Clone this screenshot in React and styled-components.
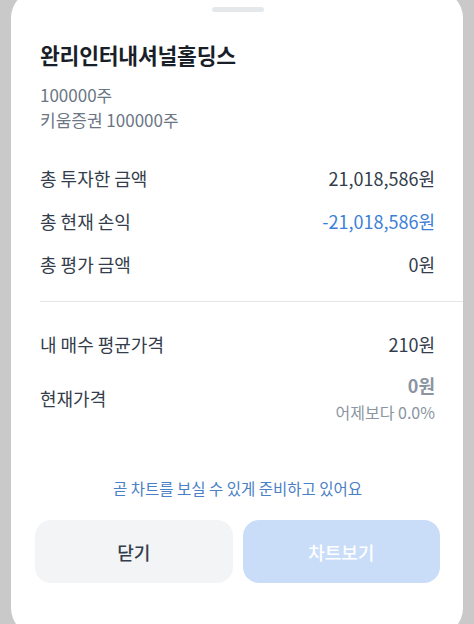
import styled, { createGlobalStyle, css } from "styled-components";

const GlobalStyle = createGlobalStyle`
  html, body {
    margin: 0;
    padding: 0;
    background: #c9c9c9;
    overflow: hidden;
  }
  body {
    font-family: "Noto Sans CJK KR", "Noto Sans", sans-serif;
    -webkit-font-smoothing: antialiased;
  }
`;

const Sheet = styled.div`
  box-sizing: border-box;
  margin: -10px 11px 0;
  height: 646px;
  background: #ffffff;
  border-radius: 28px;
  padding: 17px 28px 0 29px;
  display: flex;
  flex-direction: column;
`;

const Handle = styled.div`
  align-self: center;
  width: 52px;
  height: 5px;
  border-radius: 3px;
  background: #e5e8eb;
  margin-left: 1px;
`;

const Title = styled.h1`
  margin: 28px 0 0;
  font-size: 21.5px;
  line-height: 30px;
  font-weight: 700;
  color: #191f28;
  letter-spacing: -0.2px;
`;

const SubInfo = styled.div`
  margin-top: 12px;
  font-size: 17px;
  line-height: 25px;
  color: #6b7684;
`;

const Rows = styled.div`
  display: flex;
  flex-direction: column;
  margin-top: ${(p) => p.$top}px;
`;

const Row = styled.div`
  display: flex;
  justify-content: space-between;
  align-items: center;
  min-height: 43px;
  font-size: 18px;
  color: #333d4b;
  ${(p) =>
    p.$tall &&
    css`
      padding-top: 6px;
    `}
`;

const Value = styled.span`
  color: ${(p) => (p.$blue ? "#3d7fd8" : "#333d4b")};
`;

const PriceStack = styled.div`
  display: flex;
  flex-direction: column;
  align-items: flex-end;
`;

const Price = styled.span`
  font-size: 18px;
  line-height: 28px;
  font-weight: 700;
  color: #8b95a1;
`;

const Change = styled.span`
  font-size: 16px;
  line-height: 26px;
  color: #8b95a1;
`;

const Divider = styled.hr`
  border: none;
  height: 1px;
  background: #e5e8eb;
  margin: 16px -28px 0 0;
`;

const Notice = styled.p`
  margin: 51px 0 0;
  text-align: center;
  font-size: 15.5px;
  line-height: 24px;
  color: #4a80c6;
`;

const ButtonBar = styled.div`
  display: grid;
  grid-template-columns: 1fr 1fr;
  gap: 10px;
  margin: 20px -5px 0 -5px;
`;

const Button = styled.button`
  height: 63px;
  border: none;
  border-radius: 16px;
  font-family: inherit;
  font-size: 18px;
  font-weight: 500;
  background: ${(p) => (p.$primary ? "#c9ddf9" : "#f2f4f6")};
  color: ${(p) => (p.$primary ? "#ffffff" : "#333d4b")};
  cursor: pointer;
`;

const summary = [
  { label: "총 투자한 금액", value: "21,018,586원" },
  { label: "총 현재 손익", value: "-21,018,586원", blue: true },
  { label: "총 평가 금액", value: "0원" },
];

export default function App() {
  return (
    <>
      <GlobalStyle />
      <Sheet>
        <Handle />
        <Title>완리인터내셔널홀딩스</Title>
        <SubInfo>
          <div>100000주</div>
          <div>키움증권 100000주</div>
        </SubInfo>
        <Rows $top={24}>
          {summary.map((row) => (
            <Row key={row.label}>
              <span>{row.label}</span>
              <Value $blue={row.blue}>{row.value}</Value>
            </Row>
          ))}
        </Rows>
        <Divider />
        <Rows $top={20}>
          <Row>
            <span>내 매수 평균가격</span>
            <Value>210원</Value>
          </Row>
          <Row $tall>
            <span>현재가격</span>
            <PriceStack>
              <Price>0원</Price>
              <Change>어제보다 0.0%</Change>
            </PriceStack>
          </Row>
        </Rows>
        <Notice>곧 차트를 보실 수 있게 준비하고 있어요</Notice>
        <ButtonBar>
          <Button>닫기</Button>
          <Button $primary>차트보기</Button>
        </ButtonBar>
      </Sheet>
    </>
  );
}
